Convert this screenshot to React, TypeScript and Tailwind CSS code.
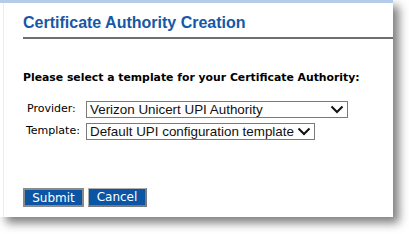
import React from 'react';

const Chevron = () => (
    <svg width="14" height="9" viewBox="0 0 14 9" className="shrink-0">
        <path d="M1.5 1.5 L7 7 L12.5 1.5" fill="none" stroke="#111" strokeWidth="2" />
    </svg>
);

const FakeSelect = ({ value, width }: { value: string; width: string }) => (
    <div
        className={`flex h-[17px] items-center justify-between border border-[#7a7a7a] bg-white pl-[3px] pr-[3px] ${width}`}
    >
        <span className="text-[13.4px] leading-none text-[#111] font-['Liberation_Sans',Arial,sans-serif] whitespace-nowrap">
            {value}
        </span>
        <Chevron />
    </div>
);

export default function App() {
    return (
        <div className="h-[234px] w-[409px] overflow-hidden bg-white">
            <div className="flex h-[217px] w-[393px] flex-col bg-white shadow-[6px_6px_9px_rgba(0,0,0,0.5)]">
                <div className="h-[3px] bg-[#b4cce9]" />
                <div className="ml-[3px] flex flex-1 flex-col border-l border-[#ececec] pl-[19px]">
                    <h1 className="mt-[10px] text-[16px] font-bold leading-[20px] text-[#1558a6] font-['Liberation_Sans',Arial,sans-serif]">
                        Certificate Authority Creation
                    </h1>
                    <div className="mt-[4px] h-[2px] bg-[#6f6f6f]" />

                    <p className="mt-[32px] text-[10.85px] font-bold leading-[13px] text-black font-['DejaVu_Sans',Verdana,sans-serif]">
                        Please select a template for your Certificate Authority:
                    </p>

                    <div className="mt-[17px] flex flex-col gap-[5px] font-['DejaVu_Sans',Verdana,sans-serif] text-[11px] text-black">
                        <div className="flex items-center">
                            <span className="w-[63px] pl-[4px]">Provider:</span>
                            <FakeSelect value="Verizon Unicert UPI Authority" width="w-[262px]" />
                        </div>
                        <div className="flex items-center">
                            <span className="w-[63px] pl-[3px]">Template:</span>
                            <FakeSelect value="Default UPI configuration template" width="w-[229px]" />
                        </div>
                    </div>

                    <div className="mt-[48px] flex gap-[4px] font-['DejaVu_Sans',Verdana,sans-serif]">
                        <button className="h-[19px] w-[61px] border-2 border-[#8a8a8a] bg-[#0a55a4] text-[12px] leading-none text-white">
                            Submit
                        </button>
                        <button className="h-[19px] w-[59px] border border-b-2 border-r-2 border-[#b0b0b0] border-b-[#7a7a7a] border-r-[#7a7a7a] bg-[#0a55a4] text-[12px] leading-none text-white">
                            Cancel
                        </button>
                    </div>
                </div>
            </div>
        </div>
    );
}
